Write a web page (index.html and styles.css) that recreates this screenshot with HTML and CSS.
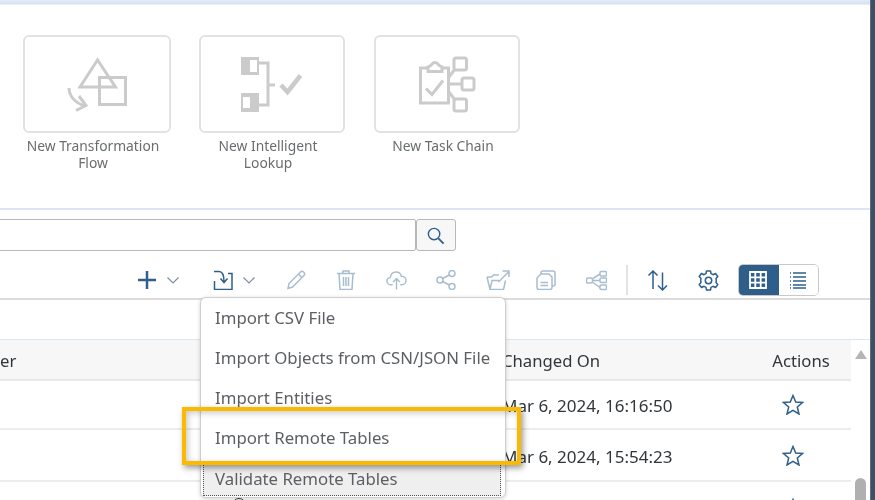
FILE: index.html
```html
<!DOCTYPE html>
<html lang="en">
<head>
<meta charset="utf-8">
<title>Data Builder</title>
<link rel="stylesheet" href="styles.css">
</head>
<body>
<div class="app">
  <main class="main">
    <div class="topband"></div>
    <section class="tiles">
      <div class="tile-item tile-wide">
        <div class="tile">
          <svg class="tile-icon" viewBox="23 35 148 98"><g class="tile-stroke"><path d="M97.500 60 L80 87 H115.500 Z"/><rect x="99.500" y="77.500" width="26" height="27"/><path d="M69 88 C69 96 75 103 85 106"/><path d="M79 96 L86 105.500 L76 110.500"/></g></svg>
        </div>
        <div class="tile-label">New Transformation Flow</div>
      </div>
      <div class="tile-item">
        <div class="tile">
          <svg class="tile-icon" viewBox="199 35 146 98"><path class="tile-fill" fill-rule="evenodd" d="M241 57 H259 V75 H241 Z M250 60 V72 H257 V60 Z"/><path class="tile-fill" fill-rule="evenodd" d="M241 93 H259 V112 H241 Z M243 97 V108 H250 V97 Z"/><g class="tile-stroke"><path d="M259 63 H268 V105 H259"/><path d="M268 85 H275"/><path class="thick" d="M281 85 L287.500 92 L300.500 75.500"/></g></svg>
        </div>
        <div class="tile-label">New Intelligent Lookup</div>
      </div>
      <div class="tile-item">
        <div class="tile">
          <svg class="tile-icon" viewBox="374 35 146 98"><g class="tile-stroke"><path d="M428 68 H420.500 V103 H448.500 V68 H442"/><path d="M428 71.500 V67 C432 66 432 62.500 435 62.500 C438 62.500 438 66 442 67 V71.500 Z"/><path d="M426 88.500 L432 94.500 L443 80.500"/><rect x="454" y="58" width="12.500" height="12" rx="2"/><rect x="462" y="78" width="12" height="12" rx="2"/><rect x="454" y="99" width="12.500" height="12" rx="2"/><path d="M449 84 H462"/><path d="M449 77 L455 69"/><path d="M449 92 L455 100"/></g></svg>
        </div>
        <div class="tile-label">New Task Chain</div>
      </div>
    </section>

    <div class="search-row">
      <div class="search-input"></div>
      <button class="search-button" aria-label="Search">
        <svg class="icon" viewBox="0 0 20 20"><circle class="stroke-active" cx="8.500" cy="8.500" r="6"/><path class="stroke-active wide" d="M13 13 L18.500 18.500"/></svg>
      </button>
    </div>

    <div class="toolbar">
      <span class="tool-sm"><svg class="icon-plus" viewBox="0 0 18 18"><path class="stroke-active plus" d="M9 0 V18 M0 9 H18"/></svg></span>
      <span class="tool-sm"><svg class="icon-chev" viewBox="0 0 12 7"><path class="stroke-chev" d="M.5 .5 L6 6 L11.500 .5"/></svg></span>
      <span class="tool-sm tool-import"><svg class="icon-lg" viewBox="0 0 20 20"><path class="stroke-active" d="M1 1.500 H6 C9.500 1.500 11 5 11 12 M7.500 8.500 L11 12.500 L14.500 8.500"/><path class="stroke-active" d="M15 3.500 H19 V19.500 H1.500 V11"/></svg></span>
      <span class="tool-sm"><svg class="icon-chev" viewBox="0 0 12 7"><path class="stroke-chev" d="M.5 .5 L6 6 L11.500 .5"/></svg></span>
      <span class="tool tool-first"><svg class="icon-lg" viewBox="0 0 20 20"><path class="stroke-off" d="M2 18.500 L3 13.500 L14.500 2 C15.500 1 16.500 1 17.500 2 L18 2.500 C19 3.500 19 4.500 18 5.500 L6.500 17 Z M12.500 4 L16 7.500"/></svg></span>
      <span class="tool"><svg class="icon-lg" viewBox="0 0 20 20"><path class="stroke-off" d="M1 3.500 H19 M7 3.500 V1 H13 V3.500 M3 3.500 L4 19.500 H16 L17 3.500 M7.500 7 V16 M10 7 V16 M12.500 7 V16"/></svg></span>
      <span class="tool"><svg class="icon-xl" viewBox="0 0 22 20"><path class="stroke-off" d="M7 14.500 H5 C2.500 14.500 1 12.500 1 10.500 C1 8.500 2.500 7 4.500 7 C5 3.500 7.500 1 10.500 1 C13.500 1 15.500 3 16 5.500 C19 5.500 21 7.500 21 10 C21 12.500 19 14.500 16.500 14.500 H15 M11 19.500 V8 M7.500 11.500 L11 8 L14.500 11.500"/></svg></span>
      <span class="tool"><svg class="icon-lg" viewBox="0 0 20 20"><circle class="stroke-off" cx="4" cy="10" r="3"/><circle class="stroke-off" cx="16" cy="3.500" r="3"/><circle class="stroke-off" cx="16" cy="16.500" r="3"/><path class="stroke-off" d="M6.700 8.500 L13.300 5 M6.700 11.500 L13.300 15"/></svg></span>
      <span class="tool"><svg class="icon-folder" viewBox="0 0 24 20"><path class="stroke-off" d="M1 7 L4 19.500 H17.500 L19.500 10.500 M1 7 H5.500 L7.500 5 H13 M4 19.500 L6 10.500 H13 M12.500 12 L23 1.500 M16.500 1 H23 V7"/></svg></span>
      <span class="tool"><svg class="icon-lg" viewBox="0 0 20 20"><path class="stroke-off" d="M5 4 V3 C5 2 6 1 7 1 H17 C18 1 19 2 19 3 V14 C19 15 18 16 17 16 H16"/><path class="stroke-off" d="M7 4 H13 L16 7 V17.500 C16 18.500 15 19.500 14 19.500 H3 C2 19.500 1 18.500 1 17.500 V8 L5 4 Z M4.500 12.500 H12 M4.500 15.500 H12"/></svg></span>
      <span class="tool"><svg class="icon-xl" viewBox="0 0 21 20"><rect class="stroke-off" x=".5" y="7.500" width="6" height="5" rx="1.500"/><rect class="stroke-off" x="14" y="1" width="6.500" height="4.500" rx="1"/><rect class="stroke-off" x="14" y="7.500" width="6.500" height="4.500" rx="1"/><rect class="stroke-off" x="14" y="14.500" width="6.500" height="4.500" rx="1"/><path class="stroke-off" d="M6.500 10 H14 M7 8 L14 3.500 M7 12 L14 17"/></svg></span>
      <span class="tool-sep"></span>
      <span class="tool tool-sort"><svg class="icon-xl" viewBox="0 0 20 21"><path class="stroke-active" d="M5.500 19 V1 M1 5.500 L5.500 1 L10 5.500 M15 2.500 V20 M10.500 15.500 L15 20 L19.500 15.500"/></svg></span>
      <span class="tool"><svg class="icon-xl" viewBox="0 0 21 21"><path class="stroke-active" d="M8.500 1 H12.500 L13 3.700 L15 4.700 L17.500 3.500 L19.800 6.500 L18 8.500 L18.300 10.500 L18 12.500 L19.800 14.500 L17.500 17.500 L15 16.300 L13 17.300 L12.500 20 H8.500 L8 17.300 L6 16.300 L3.500 17.500 L1.200 14.500 L3 12.500 L2.700 10.500 L3 8.500 L1.200 6.500 L3.500 3.500 L6 4.700 L8 3.700 Z" stroke-linejoin="round"/><circle class="stroke-active" cx="10.500" cy="10.500" r="3.200"/></svg></span>
      <div class="segment">
        <span class="segment-on"><svg class="icon-grid" viewBox="0 0 18 18"><path class="stroke-white" d="M1 1 H17 V17 H1 Z M1 6.300 H17 M1 11.700 H17 M6.300 1 V17 M11.700 1 V17"/></svg></span>
        <span class="segment-off"><svg class="icon-grid" viewBox="0 0 18 18"><path class="stroke-list" d="M4 2 H17 M4 6 H17 M4 10 H17 M4 14 H17 M1 2 H2 M1 6 H2 M1 10 H2 M1 14 H2 M4 17 H17 M1 17 H2"/></svg></span>
      </div>
    </div>

    <div class="table-gap"></div>
    <div class="table-wrap">
      <div class="table">
        <div class="row row-head">
          <span class="cell-owner">er</span>
          <span class="cell-date">Changed On</span>
          <span class="cell-actions">Actions</span>
        </div>
        <div class="row row-one">
          <span class="cell-owner"></span>
          <span class="cell-date">Mar 6, 2024, 16:16:50</span>
          <span class="cell-actions"><svg class="star" viewBox="0 0 22 21"><path class="stroke-active" d="M11 1.500 L13.700 8 L20.500 8.500 L15.300 13 L17 20 L11 16.300 L5 20 L6.700 13 L1.500 8.500 L8.300 8 Z"/></svg></span>
        </div>
        <div class="row row-two">
          <span class="cell-owner"></span>
          <span class="cell-date">Mar 6, 2024, 15:54:23</span>
          <span class="cell-actions"><svg class="star" viewBox="0 0 22 21"><path class="stroke-active" d="M11 1.500 L13.700 8 L20.500 8.500 L15.300 13 L17 20 L11 16.300 L5 20 L6.700 13 L1.500 8.500 L8.300 8 Z"/></svg></span>
        </div>
        <div class="row row-three">
          <span class="cell-owner"><span class="row-dot"></span></span>
          <span class="cell-date"></span>
          <span class="cell-actions"><svg class="star" viewBox="0 0 22 21"><path class="stroke-active" d="M11 1.500 L13.700 8 L20.500 8.500 L15.300 13 L17 20 L11 16.300 L5 20 L6.700 13 L1.500 8.500 L8.300 8 Z"/></svg></span>
        </div>
      </div>
      <div class="scrollbar">
        <span class="scroll-up"></span>
        <span class="scroll-thumb"></span>
      </div>
    </div>

    <div class="menu">
      <div class="menu-item">Import CSV File</div>
      <div class="menu-item">Import Objects from CSN/JSON File</div>
      <div class="menu-item">Import Entities</div>
      <div class="menu-item">Import Remote Tables</div>
      <div class="menu-item menu-focus">Validate Remote Tables</div>
    </div>
    <div class="callout"></div>
  </main>
  <div class="edge"></div>
</div>
</body>
</html>
```

FILE: styles.css
```css
* { box-sizing: border-box; }
html, body { margin: 0; height: 500px; overflow: hidden; background: #fff; }
body { font-family: "Noto Sans", "Open Sans", sans-serif; color: #32363a; }
svg { display: block; fill: none; }

.app { display: flex; height: 500px; overflow: hidden; filter: blur(.35px); }
.main { position: relative; flex: 1; min-width: 0; }
.edge { width: 5px; background: #3f5066; border-left: 1px solid #5c6c80; }

.topband { height: 5px; background: linear-gradient(#e3ecf6, #d6e3f2 70%, #eef3f9); }

.tiles { display: flex; height: 205px; padding: 30px 0 0 23px; border-bottom: 2px solid #dbe6f2; }
.tile-item { width: 146px; margin-right: 29px; }
.tile-wide { width: 148px; margin-right: 28px; }
.tile { height: 98px; border: 2px solid #e2e2e2; border-radius: 6px; background: #fff; overflow: hidden; }
.tile-icon { width: calc(100% + 4px); height: 98px; margin: -2px; }
.tile-stroke path, .tile-stroke rect { stroke: #cbcbcb; stroke-width: 3; }
.tile-stroke .thick { stroke-width: 4.500; }
.tile-fill { fill: #cbcbcb; }
.tile-label { margin-top: 4px; padding-right: 8px; text-align: center; font-size: 13.800px; line-height: 17px; color: #6a6d70; }

.search-row { display: flex; height: 32px; margin-top: 9px; }
.search-input { width: 419px; margin-left: -3px; border: 1.500px solid #b8b8b8; border-radius: 0 2px 2px 0; background: #fff; }
.search-button { display: flex; align-items: center; justify-content: center; width: 40px; padding: 0; border: 1.500px solid #b8b8b8; border-radius: 3px; background: #f7f7f7; }
.icon { width: 19px; height: 19px; margin-right: 2px; }

.toolbar { display: flex; align-items: center; justify-content: flex-end; height: 32px; margin-top: 13px; padding-right: 51px; }
.tool, .tool-sm { display: flex; align-items: center; justify-content: center; flex: none; height: 24px; }
.tool { width: 50px; }
.tool-sm { width: 26px; }
.tool-import { margin-left: 24px; }
.tool-first { margin-left: 9px; }
.tool-sep { flex: none; width: 2px; height: 30px; margin: 0 5px; background: #e3e3e3; }
.tool-sort .icon-xl { margin-right: 2px; }
.icon-plus { width: 18px; height: 18px; }
.icon-chev { width: 12px; height: 7px; }
.icon-lg { width: 20px; height: 20px; }
.icon-xl { width: 21px; height: 21px; }
.icon-folder { width: 24px; height: 20px; margin-left: 4px; }
.icon-grid { width: 18px; height: 18px; }

.stroke-active { stroke: #2f5f8a; stroke-width: 1.500; }
.stroke-active.wide { stroke-width: 2; }
.stroke-active.plus { stroke-width: 2.500; }
.stroke-chev { stroke: #7d8fa8; stroke-width: 1.200; }
.stroke-off { stroke: #a9bdd1; stroke-width: 1.500; }
.stroke-white { stroke: #fff; stroke-width: 1.800; }
.stroke-list { stroke: #2f5f8a; stroke-width: 1.300; }

.segment { display: flex; flex: none; width: 81px; height: 32px; margin-left: 5px; border: 1.500px solid #c9c9c9; border-radius: 5px; overflow: hidden; }
.segment-on, .segment-off { display: flex; align-items: center; justify-content: center; }
.segment-on { width: 41px; margin: -1.500px 0 -1.500px -1.500px; background: #2d5f8a; }
.segment-off { flex: 1; background: #fff; }

.table-gap { height: 42px; margin-top: 2px; border-top: 2px solid #dcdcdc; border-bottom: 1px solid #dbe6f2; }
.table-wrap { display: flex; }
.table { width: 851px; flex: none; }
.row { display: flex; align-items: center; border-bottom: 2px solid #ececec; font-size: 16.700px; }
.row-head { height: 41px; padding-top: 1px; background: #f7f7f7; border-bottom-color: #e8e8e8; }
.row-one { height: 49px; }
.row-two { height: 52px; }
.row-one .cell-date { padding-top: 1px; font-size: 17px; }
.row-two .cell-date { padding-top: 3px; font-size: 17px; }
.row-three { height: 40px; align-items: flex-start; border-bottom: 0; padding-top: 16px; }
.cell-owner { width: 502px; flex: none; }
.cell-date { width: 260px; flex: none; }
.cell-actions { display: flex; justify-content: center; width: 80px; flex: none; margin-left: -1px; }
.star { width: 22px; height: 21px; margin-right: 16px; }
.row-dot { display: block; width: 14px; height: 14px; margin-left: 232px; border: 1.500px solid #32363a; border-radius: 50%; }

.scrollbar { flex: 1; }
.scroll-up { display: block; width: 0; height: 0; margin: 10px auto 0 4px; border: 6px solid transparent; border-top: 0; border-bottom: 9px solid #b5b5b5; }
.scroll-thumb { display: block; width: 11px; height: 60px; margin: 119px 0 0 4px; border-radius: 6px; background: #b0b0b0; }

.menu { position: absolute; left: 200px; top: 297px; width: 306px; height: 201px; background: #fff; border: 1px solid #cfcfcf; border-radius: 6px; box-shadow: 0 1px 4px rgba(0,0,0,.18); font-size: 16.800px; color: #5c5f63; }
.menu-item { height: 40px; padding-left: 14px; line-height: 40px; }
.menu-focus { height: 35px; margin: 3px 4px 0 2px; padding-left: 11px; line-height: 33px; background: #efefef; border: 1.500px dotted #555; }
.callout { position: absolute; left: 182px; top: 407px; width: 339px; height: 58px; border: 4px solid #fbb900; box-shadow: 2px 3px 6px rgba(0,0,0,.4), inset 2px 2px 6px rgba(0,0,0,.22); }
```
